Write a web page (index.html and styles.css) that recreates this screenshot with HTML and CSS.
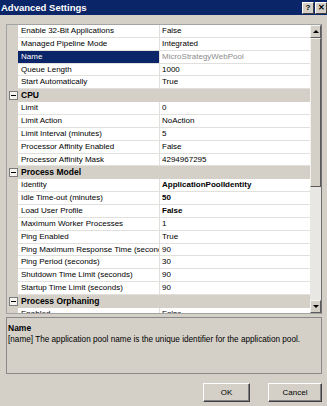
FILE: index.html
```html
<!DOCTYPE html>
<html>
<head>
    <meta charset="utf-8">
    <title>Advanced Settings</title>
    <link rel="stylesheet" href="styles.css">
</head>
<body>

<div class="window">
    <div class="titlebar">
        <div class="title">Advanced Settings</div>
        <div class="caption-btn">?</div>
        <div class="caption-btn">&#x2715;</div>
    </div>

    <div class="dialog">
        <div class="grid">
            <div class="grid-view">
                <div class="row"><div class="gut"></div><div class="n">Enable 32-Bit Applications</div><div class="v">False</div></div>
                <div class="row"><div class="gut"></div><div class="n">Managed Pipeline Mode</div><div class="v">Integrated</div></div>
                <div class="row sel"><div class="gut"></div><div class="n">Name</div><div class="v ro">MicroStrategyWebPool</div></div>
                <div class="row"><div class="gut"></div><div class="n">Queue Length</div><div class="v">1000</div></div>
                <div class="row"><div class="gut"></div><div class="n">Start Automatically</div><div class="v">True</div></div>

                <div class="row cat"><div class="gut"><span class="minus"></span></div><div class="c">CPU</div></div>
                <div class="row"><div class="gut"></div><div class="n">Limit</div><div class="v">0</div></div>
                <div class="row"><div class="gut"></div><div class="n">Limit Action</div><div class="v">NoAction</div></div>
                <div class="row"><div class="gut"></div><div class="n">Limit Interval (minutes)</div><div class="v">5</div></div>
                <div class="row"><div class="gut"></div><div class="n">Processor Affinity Enabled</div><div class="v">False</div></div>
                <div class="row"><div class="gut"></div><div class="n">Processor Affinity Mask</div><div class="v">4294967295</div></div>

                <div class="row cat"><div class="gut"><span class="minus"></span></div><div class="c">Process Model</div></div>
                <div class="row"><div class="gut"></div><div class="n">Identity</div><div class="v b">ApplicationPoolIdentity</div></div>
                <div class="row"><div class="gut"></div><div class="n">Idle Time-out (minutes)</div><div class="v b">50</div></div>
                <div class="row"><div class="gut"></div><div class="n">Load User Profile</div><div class="v b">False</div></div>
                <div class="row"><div class="gut"></div><div class="n">Maximum Worker Processes</div><div class="v">1</div></div>
                <div class="row"><div class="gut"></div><div class="n">Ping Enabled</div><div class="v">True</div></div>
                <div class="row"><div class="gut"></div><div class="n">Ping Maximum Response Time (seconds)</div><div class="v">90</div></div>
                <div class="row"><div class="gut"></div><div class="n">Ping Period (seconds)</div><div class="v">30</div></div>
                <div class="row"><div class="gut"></div><div class="n">Shutdown Time Limit (seconds)</div><div class="v">90</div></div>
                <div class="row"><div class="gut"></div><div class="n">Startup Time Limit (seconds)</div><div class="v">90</div></div>

                <div class="row cat"><div class="gut"><span class="minus"></span></div><div class="c">Process Orphaning</div></div>
                <div class="row"><div class="gut"></div><div class="n">Enabled</div><div class="v">False</div></div>
            </div>

            <div class="scrollbar">
                <div class="sb-btn"><span class="arrow up"></span></div>
                <div class="sb-thumb"></div>
                <div class="sb-track"></div>
                <div class="sb-btn"><span class="arrow down"></span></div>
            </div>
        </div>

        <div class="desc">
            <div class="desc-title">Name</div>
            <div class="desc-text">[name] The application pool name is the unique identifier for the application pool.</div>
        </div>

        <div class="buttons">
            <div class="btn ok">OK</div>
            <div class="btn cancel">Cancel</div>
        </div>
    </div>
</div>

</body>
</html>
```

FILE: styles.css
```css
/* classic dialog look */
body {
    margin: 0;
    background: #d4d0c8;
    font-family: "Liberation Sans", Arial, sans-serif;
    font-size: 8px;
    color: #000;
}

.window {
    width: 327px;
    height: 406px;
    overflow: hidden;
}

.titlebar {
    height: 15px;
    background: #0b2569;
    display: flex;
    align-items: center;
}

.title {
    flex: 1;
    color: #fff;
    font-weight: bold;
    font-size: 9.5px;
    padding-left: 1px;
}

.caption-btn {
    width: 10px;
    height: 10px;
    margin-left: 1px;
    background: #d4d0c8;
    border-top: 1px solid #fff;
    border-left: 1px solid #fff;
    border-right: 1px solid #404040;
    border-bottom: 1px solid #404040;
    font-size: 8px;
    font-weight: bold;
    line-height: 10px;
    text-align: center;
}

.dialog {
    padding: 9px 5px 0 6px;
}

.grid {
    display: flex;
    height: 288px;
    border: 1px solid #a3a3a3;
    border-right-color: #707070;
    background: #fff;
}

.grid-view {
    flex: 1;
    overflow: hidden;
}

.row {
    display: flex;
    height: 12.86px;
    line-height: 12px;
    white-space: nowrap;
}

.gut {
    width: 11px;
    flex: none;
    background: #d4d0c8;
    position: relative;
}

.n {
    width: 138px;
    flex: none;
    padding-left: 3px;
    overflow: hidden;
    border-right: 1px solid #e2e0dc;
    border-bottom: 1px solid #e2e0dc;
}

.v {
    flex: 1;
    padding-left: 2px;
    border-bottom: 1px solid #e2e0dc;
    overflow: hidden;
}

.v.b {
    font-weight: bold;
}

.v.ro {
    color: #8c8c8c;
}

.row.sel .n {
    background: #0b2569;
    color: #fff;
}

.row.cat {
    background: #d4d0c8;
}

.c {
    padding-left: 3px;
    font-weight: bold;
    font-size: 8.5px;
}

.minus {
    position: absolute;
    left: 2px;
    top: 2px;
    width: 7px;
    height: 7px;
    border: 1px solid #7b7b7b;
    background: #f4f3f0;
}

.minus::after {
    content: "";
    position: absolute;
    left: 1px;
    top: 3px;
    width: 5px;
    height: 1px;
    background: #000;
}

.scrollbar {
    width: 11px;
    display: flex;
    flex-direction: column;
    background: #e9e7e3;
}

.sb-btn,
.sb-thumb {
    background: #d4d0c8;
    border-top: 1px solid #f4f3f0;
    border-left: 1px solid #f4f3f0;
    border-right: 1px solid #5a5a5a;
    border-bottom: 1px solid #5a5a5a;
}

.sb-btn {
    height: 11px;
    flex: none;
    display: flex;
    align-items: center;
    justify-content: center;
}

.sb-thumb {
    height: 147px;
    flex: none;
}

.sb-track {
    flex: 1;
}

.arrow {
    width: 0;
    height: 0;
    border-left: 3px solid transparent;
    border-right: 3px solid transparent;
}

.arrow.up {
    border-bottom: 3px solid #000;
}

.arrow.down {
    border-top: 3px solid #000;
}

.desc {
    margin-top: 3px;
    height: 51px;
    border: 1px solid #8a8a8a;
    padding: 4px 0 0 1px;
}

.desc-title {
    font-weight: bold;
    font-size: 8.5px;
    line-height: 12px;
}

.desc-text {
    line-height: 12px;
    font-size: 8.2px;
}

.buttons {
    display: flex;
    justify-content: flex-end;
    gap: 18px;
    margin-top: 9px;
}

.btn {
    height: 17px;
    line-height: 17px;
    text-align: center;
    background: #d4d0c8;
    border-top: 1px solid #fff;
    border-left: 1px solid #fff;
    border-right: 1px solid #404040;
    border-bottom: 1px solid #404040;
    box-shadow: inset -1px -1px 0 #808080;
}

.btn.ok {
    width: 45px;
}

.btn.cancel {
    width: 52px;
}
```
